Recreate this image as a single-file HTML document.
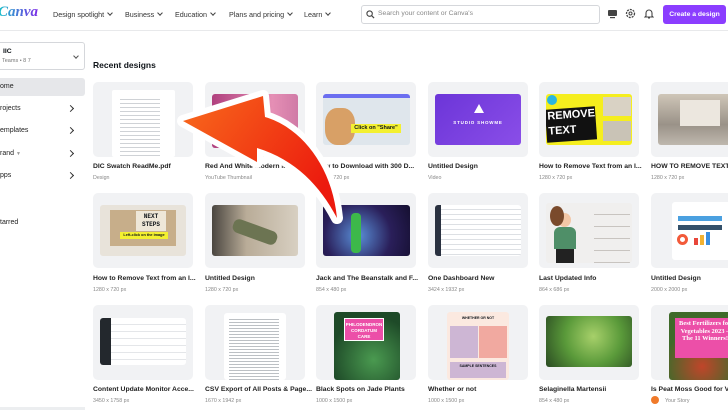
<!DOCTYPE html>
<html><head><meta charset="utf-8"><style>
*{margin:0;padding:0;box-sizing:border-box}
body{width:728px;height:410px;overflow:hidden;background:#fff;font-family:"Liberation Sans",sans-serif;position:relative;color:#0e1318}
.a{position:absolute}
.hdr{left:0;top:0;width:728px;height:31px;border-bottom:1px solid #e8e9eb;background:#fff}
.nav{top:10px;font-size:7.2px;color:#333}
.nav:after{content:"";display:inline-block;width:3px;height:3px;border-right:1px solid #444;border-bottom:1px solid #444;transform:rotate(45deg);margin-left:4px;position:relative;top:-2px}
.side{font-size:7px;color:#222}
.chev{width:5px;height:5px;border-right:1.2px solid #333;border-top:1.2px solid #333;transform:rotate(45deg)}
.th{width:100px;height:75px;background:#f1f2f4;border-radius:5px;overflow:hidden}
.t{font-size:6.8px;font-weight:bold;color:#222;white-space:nowrap}
.s{font-size:5.3px;color:#888;white-space:nowrap}
.in{position:absolute;border-radius:3px;overflow:hidden}
</style></head><body>
<div class="a hdr"></div>
<div class="a" style="left:-2px;top:4px;font:italic bold 15px 'Liberation Serif',serif;background:linear-gradient(90deg,#14c4c8,#7d2ae8);-webkit-background-clip:text;color:transparent">Canva</div>
<div class="a nav" style="left:53px">Design spotlight</div>
<div class="a nav" style="left:125px">Business</div>
<div class="a nav" style="left:175px">Education</div>
<div class="a nav" style="left:229px">Plans and pricing</div>
<div class="a nav" style="left:304px">Learn</div>
<div class="a" style="left:361px;top:5px;width:239px;height:19px;border:1px solid #d5d7db;border-radius:3px"></div>
<svg class="a" style="left:366px;top:10px" width="9" height="9" viewBox="0 0 10 10"><circle cx="4" cy="4" r="3" fill="none" stroke="#444" stroke-width="1.2"/><path d="M6.3 6.3L9 9" stroke="#444" stroke-width="1.3"/></svg>
<div class="a" style="left:378px;top:10px;font-size:6.8px;color:#888">Search your content or Canva's</div>
<svg class="a" style="left:607px;top:9px" width="11" height="10" viewBox="0 0 11 10"><rect x="1" y="1" width="9" height="6" rx="1" fill="#444"/><rect x="3" y="8" width="5" height="1.2" fill="#444"/></svg>
<svg class="a" style="left:625px;top:8px" width="11" height="11" viewBox="0 0 11 11"><circle cx="5.5" cy="5.5" r="4" fill="none" stroke="#444" stroke-width="1.3" stroke-dasharray="2 1"/><circle cx="5.5" cy="5.5" r="1.5" fill="none" stroke="#444"/></svg>
<svg class="a" style="left:644px;top:8px" width="10" height="11" viewBox="0 0 10 11"><path d="M2 8V5a3 3 0 0 1 6 0v3l1 1H1z" fill="none" stroke="#444" stroke-width="1.1"/><path d="M4 10h2" stroke="#444"/></svg>
<div class="a" style="left:663px;top:5px;width:63px;height:19px;background:#8b3dff;border-radius:3px;color:#fff;font-size:6.8px;font-weight:bold;text-align:center;line-height:19px">Create a design</div>

<div class="a" style="left:-4px;top:42px;width:89px;height:28px;border:1px solid #d5d7db;border-radius:3px"></div>
<div class="a" style="left:3px;top:48px;font-size:6.8px;font-weight:bold">IIC</div>
<div class="a" style="left:2px;top:58px;font-size:5.5px;color:#777">Teams • 8 7</div>
<div class="a" style="left:74px;top:54px;width:4px;height:4px;border-right:1px solid #555;border-bottom:1px solid #555;transform:rotate(45deg)"></div>
<div class="a" style="left:0;top:78px;width:85px;height:18px;background:#e6e7ea;border-radius:0 3px 3px 0"></div>
<div class="a side" style="left:0;top:83px">ome</div>
<div class="a side" style="left:0;top:105px">rojects</div><div class="a chev" style="left:68px;top:106px"></div>
<div class="a side" style="left:0;top:127px">emplates</div><div class="a chev" style="left:68px;top:128px"></div>
<div class="a side" style="left:0;top:150px">rand <span style="color:#999;font-size:5px">▼</span></div><div class="a chev" style="left:68px;top:151px"></div>
<div class="a side" style="left:0;top:172px">pps</div><div class="a chev" style="left:68px;top:173px"></div>
<div class="a side" style="left:0;top:219px">tarred</div>
<div class="a" style="left:0;top:407px;width:85px;height:3px;background:#eceef0"></div>

<div class="a" style="left:93px;top:60px;font-size:8.5px;font-weight:bold">Recent designs</div>

<!-- Row 1 -->
<div class="a th" style="left:93px;top:82px"><div class="in" style="left:19px;top:8px;width:63px;height:67px;background:#fff;border-radius:2px;background-image:repeating-linear-gradient(#fff 0 3px,#cfd2d6 3px 4px);background-size:40px 100%;background-repeat:no-repeat;background-position:8px 6px"></div></div>
<div class="a t" style="left:93px;top:163px">DIC Swatch ReadMe.pdf</div><div class="a s" style="left:93px;top:175px">Design</div>

<div class="a th" style="left:205px;top:82px"><div class="in" style="left:7px;top:12px;width:86px;height:54px;background:linear-gradient(90deg,#b0407e,#e58fb5 70%,#d07aa6)"></div></div>
<div class="a t" style="left:205px;top:163px">Red And White Modern M...</div><div class="a s" style="left:205px;top:175px">YouTube Thumbnail</div>

<div class="a th" style="left:316px;top:82px"><div class="in" style="left:7px;top:12px;width:87px;height:51px;background:linear-gradient(#6b6ef0 0 4px,#dfe6ec 4px)"><div class="a" style="left:2px;top:14px;width:30px;height:37px;background:#d8a066;border-radius:40%"></div><div class="a" style="left:28px;top:30px;width:50px;height:9px;background:#f3f030;font-size:5.5px;font-weight:bold;line-height:9px;text-align:center">Click on "Share"</div></div></div>
<div class="a t" style="left:316px;top:163px">How to Download with 300 D...</div><div class="a s" style="left:316px;top:175px">1280 x 720 px</div>

<div class="a th" style="left:428px;top:82px"><div class="in" style="left:7px;top:12px;width:86px;height:51px;background:linear-gradient(135deg,#6c35d8,#8a4ee8);color:#fff;font-size:4.5px;font-weight:bold;text-align:center;padding-top:26px;letter-spacing:.8px">STUDIO SHOWME</div><div class="a" style="left:46px;top:22px;width:0;height:0;border-left:5px solid transparent;border-right:5px solid transparent;border-bottom:9px solid #fff"></div></div>
<div class="a t" style="left:428px;top:163px">Untitled Design</div><div class="a s" style="left:428px;top:175px">Video</div>

<div class="a th" style="left:539px;top:82px"><div class="in" style="left:7px;top:12px;width:86px;height:51px;background:#f5ee1e"><div class="a" style="left:0;top:14px;width:50px;height:33px;background:#111;transform:rotate(-4deg);color:#fff;font:bold 11px 'Liberation Sans Narrow','Liberation Sans',sans-serif;line-height:15px;padding-left:2px">REMOVE<br>TEXT</div><div class="a" style="left:57px;top:3px;width:28px;height:19px;background:#d9d2c4"></div><div class="a" style="left:57px;top:27px;width:28px;height:20px;background:#c9c3b6"></div><div class="a" style="left:1px;top:1px;width:10px;height:10px;border-radius:50%;background:#2bb6e0"></div></div></div>
<div class="a t" style="left:539px;top:163px">How to Remove Text from an I...</div><div class="a s" style="left:539px;top:175px">1280 x 720 px</div>

<div class="a th" style="left:651px;top:82px"><div class="in" style="left:7px;top:12px;width:86px;height:51px;background:linear-gradient(#cfc6b8,#9a9288 60%,#bfb8ae)"><div class="a" style="left:22px;top:6px;width:40px;height:26px;background:#ece7df"></div></div></div>
<div class="a t" style="left:651px;top:163px">HOW TO REMOVE TEXT F...</div><div class="a s" style="left:651px;top:175px">1280 x 720 px</div>

<!-- Row 2 -->
<div class="a th" style="left:93px;top:193px"><div class="in" style="left:7px;top:12px;width:86px;height:51px;background:#e8e3da"><div class="a" style="left:10px;top:5px;width:66px;height:36px;background:#c7ae8a"></div><div class="a" style="left:36px;top:6px;width:30px;height:20px;background:#eee7d8;font:bold 6px 'Liberation Mono',monospace;text-align:center;line-height:8px;padding-top:2px">NEXT STEPS</div><div class="a" style="left:20px;top:27px;width:48px;height:7px;background:#f3f030;font-size:3.8px;line-height:7px;text-align:center;font-weight:bold">Left-click on the image</div></div></div>
<div class="a t" style="left:93px;top:275px">How to Remove Text from an I...</div><div class="a s" style="left:93px;top:287px">1280 x 720 px</div>

<div class="a th" style="left:205px;top:193px"><div class="in" style="left:7px;top:12px;width:86px;height:51px;background:linear-gradient(90deg,#4a4640,#b9ac98 40%,#d8d0c2)"><div class="a" style="left:20px;top:20px;width:46px;height:14px;background:#6c7452;border-radius:6px;transform:rotate(20deg)"></div></div></div>
<div class="a t" style="left:205px;top:275px">Untitled Design</div><div class="a s" style="left:205px;top:287px">1280 x 720 px</div>

<div class="a th" style="left:316px;top:193px"><div class="in" style="left:7px;top:12px;width:87px;height:51px;background:radial-gradient(circle at 40% 60%,#5a8fd8,#2a1f5a 55%,#150f30)"><div class="a" style="left:28px;top:8px;width:10px;height:40px;background:#3db84a;border-radius:4px"></div></div></div>
<div class="a t" style="left:316px;top:275px">Jack and The Beanstalk and F...</div><div class="a s" style="left:316px;top:287px">854 x 480 px</div>

<div class="a th" style="left:428px;top:193px"><div class="in" style="left:7px;top:12px;width:86px;height:51px;background:#fff;background-image:repeating-linear-gradient(#fff 0 4px,#dde0e4 4px 5px)"><div class="a" style="left:0;top:0;width:6px;height:51px;background:#2a3140"></div></div></div>
<div class="a t" style="left:428px;top:275px">One Dashboard New</div><div class="a s" style="left:428px;top:287px">3424 x 1932 px</div>

<div class="a th" style="left:539px;top:193px"><div class="in" style="left:7px;top:10px;width:86px;height:60px;background:#f0efee;background-image:repeating-linear-gradient(#f0efee 0 11px,#c8c4c0 11px 12px);background-size:36px 100%;background-repeat:no-repeat;background-position:48px 0"><div class="a" style="left:12px;top:10px;width:13px;height:14px;border-radius:50%;background:#f3c7a6"></div><div class="a" style="left:4px;top:3px;width:14px;height:20px;border-radius:50%;background:#7a4a2c;z-index:-0"></div><div class="a" style="left:8px;top:24px;width:22px;height:22px;background:#4f8f68;border-radius:6px 6px 0 0"></div><div class="a" style="left:10px;top:46px;width:18px;height:14px;background:#222"></div></div></div>
<div class="a t" style="left:539px;top:275px">Last Updated Info</div><div class="a s" style="left:539px;top:287px">864 x 686 px</div>

<div class="a th" style="left:651px;top:193px"><div class="in" style="left:21px;top:9px;width:79px;height:58px;background:#fff"><div class="a" style="left:6px;top:14px;width:44px;height:5px;background:#4aa0e0"></div><div class="a" style="left:6px;top:23px;width:44px;height:5px;background:#33506a"></div><div class="a" style="left:5px;top:32px;width:11px;height:11px;border-radius:50%;border:3px solid #f25a3a"></div><div class="a" style="left:22px;top:36px;width:4px;height:7px;background:#e8463a"></div><div class="a" style="left:28px;top:33px;width:4px;height:10px;background:#f2b231"></div><div class="a" style="left:34px;top:30px;width:4px;height:13px;background:#3a8fe0"></div></div></div>
<div class="a t" style="left:651px;top:275px">Untitled Design</div><div class="a s" style="left:651px;top:287px">2000 x 2000 px</div>

<!-- Row 3 -->
<div class="a th" style="left:93px;top:305px"><div class="in" style="left:7px;top:13px;width:86px;height:47px;background:#fff;background-image:repeating-linear-gradient(#fff 0 6px,#e4e6e9 6px 7px)"><div class="a" style="left:0;top:0;width:11px;height:47px;background:#23282d"></div></div></div>
<div class="a t" style="left:93px;top:386px">Content Update Monitor Acce...</div><div class="a s" style="left:93px;top:398px">3450 x 1758 px</div>

<div class="a th" style="left:205px;top:305px"><div class="in" style="left:19px;top:8px;width:62px;height:67px;background:#fff;background-image:repeating-linear-gradient(#fff 0 2px,#bcc0c4 2px 3px);background-size:50px 100%;background-repeat:no-repeat;background-position:5px 4px"></div></div>
<div class="a t" style="left:205px;top:386px">CSV Export of All Posts &amp; Page...</div><div class="a s" style="left:205px;top:398px">1670 x 1942 px</div>

<div class="a th" style="left:316px;top:305px"><div class="in" style="left:18px;top:7px;width:66px;height:68px;background:radial-gradient(circle at 60% 70%,#4a9a50,#1e4a28 70%)"><div class="a" style="left:10px;top:6px;width:40px;height:23px;background:#ec4fa8;border:1px solid #fff;color:#fff;font-size:4.5px;font-weight:bold;text-align:center;line-height:6px;padding-top:3px">PHILODENDRON CORDATUM CARE</div></div></div>
<div class="a t" style="left:316px;top:386px">Black Spots on Jade Plants</div><div class="a s" style="left:316px;top:398px">1000 x 1500 px</div>

<div class="a th" style="left:428px;top:305px"><div class="in" style="left:19px;top:7px;width:62px;height:68px;background:#fbe9e0"><div class="a" style="left:3px;top:14px;width:28px;height:32px;background:#cdb6d4"></div><div class="a" style="left:32px;top:14px;width:28px;height:32px;background:#f1a9a0"></div><div class="a" style="left:3px;top:50px;width:56px;height:16px;background:#cdb6d4;font-size:3.5px;font-weight:bold;text-align:center;padding-top:2px">SAMPLE SENTENCES</div><div class="a" style="left:0;top:4px;width:62px;font-size:3.5px;font-weight:bold;text-align:center">WHETHER OR NOT</div></div></div>
<div class="a t" style="left:428px;top:386px">Whether or not</div><div class="a s" style="left:428px;top:398px">1000 x 1500 px</div>

<div class="a th" style="left:539px;top:305px"><div class="in" style="left:7px;top:11px;width:86px;height:51px;background:radial-gradient(circle at 55% 40%,#a7d06a,#5a9a3a 50%,#2a4a22)"></div></div>
<div class="a t" style="left:539px;top:386px">Selaginella Martensii</div><div class="a s" style="left:539px;top:398px">854 x 480 px</div>

<div class="a th" style="left:651px;top:305px"><div class="in" style="left:18px;top:7px;width:66px;height:68px;background:radial-gradient(circle at 50% 80%,#c0452a,#3f6a2a 60%)"><div class="a" style="left:6px;top:6px;width:60px;height:40px;background:#ec4fa8;color:#fff;font:bold 6.5px 'Liberation Serif',serif;text-align:center;line-height:7.5px;padding-top:2px">Best Fertilizers for Vegetables 2023 – The 11 Winners!</div></div></div>
<div class="a t" style="left:651px;top:386px">Is Peat Moss Good for Ve...</div>
<div class="a" style="left:651px;top:396px;width:8px;height:8px;border-radius:50%;background:#f07a2a"></div><div class="a s" style="left:665px;top:398px">Your Story</div>

<!-- Arrow -->
<svg class="a" style="left:0;top:0" width="728" height="410" viewBox="0 0 728 410">
<defs><linearGradient id="g" x1="0" y1="0" x2="1" y2="0.6"><stop offset="0" stop-color="#f86a1c"/><stop offset="1" stop-color="#ec1a0e"/></linearGradient></defs>
<path d="M183,121 L263,96 L265,117 C300,127 332,165 337,218 C320,186 296,160 257,148 L257,162 Z" fill="url(#g)" stroke="#fff" stroke-width="12" stroke-linejoin="round" paint-order="stroke"/>
</svg>
</body></html>
